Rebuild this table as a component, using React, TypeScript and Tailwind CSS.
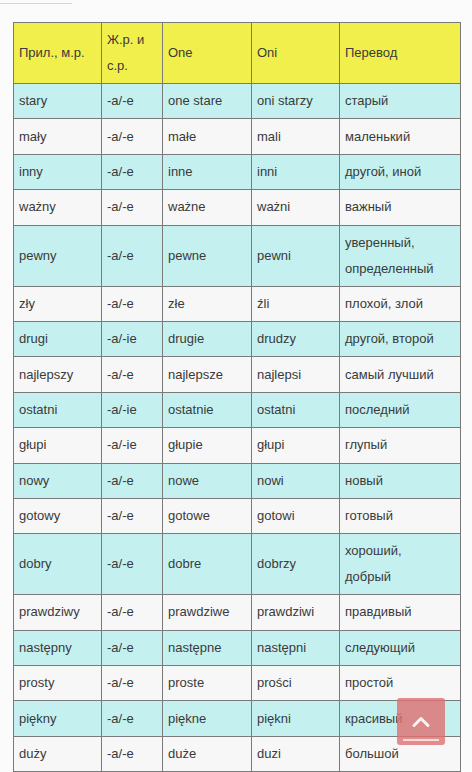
import { ChevronUp } from "lucide-react";

type Row = { m: string; f: string; one: string; oni: string; tr: string[]; tall?: boolean };

const rows: Row[] = [
  { m: "stary", f: "-a/-e", one: "one stare", oni: "oni starzy", tr: ["старый"] },
  { m: "mały", f: "-a/-e", one: "małe", oni: "mali", tr: ["маленький"] },
  { m: "inny", f: "-a/-e", one: "inne", oni: "inni", tr: ["другой, иной"] },
  { m: "ważny", f: "-a/-e", one: "ważne", oni: "ważni", tr: ["важный"] },
  { m: "pewny", f: "-a/-e", one: "pewne", oni: "pewni", tr: ["уверенный,", "определенный"], tall: true },
  { m: "zły", f: "-a/-e", one: "złe", oni: "źli", tr: ["плохой, злой"] },
  { m: "drugi", f: "-a/-ie", one: "drugie", oni: "drudzy", tr: ["другой, второй"] },
  { m: "najlepszy", f: "-a/-e", one: "najlepsze", oni: "najlepsi", tr: ["самый лучший"] },
  { m: "ostatni", f: "-a/-ie", one: "ostatnie", oni: "ostatni", tr: ["последний"] },
  { m: "głupi", f: "-a/-ie", one: "głupie", oni: "głupi", tr: ["глупый"] },
  { m: "nowy", f: "-a/-e", one: "nowe", oni: "nowi", tr: ["новый"] },
  { m: "gotowy", f: "-a/-e", one: "gotowe", oni: "gotowi", tr: ["готовый"] },
  { m: "dobry", f: "-a/-e", one: "dobre", oni: "dobrzy", tr: ["хороший,", "добрый"], tall: true },
  { m: "prawdziwy", f: "-a/-e", one: "prawdziwe", oni: "prawdziwi", tr: ["правдивый"] },
  { m: "następny", f: "-a/-e", one: "następne", oni: "następni", tr: ["следующий"] },
  { m: "prosty", f: "-a/-e", one: "proste", oni: "prości", tr: ["простой"] },
  { m: "piękny", f: "-a/-e", one: "piękne", oni: "piękni", tr: ["красивый"] },
  { m: "duży", f: "-a/-e", one: "duże", oni: "duzi", tr: ["большой"] },
];

const cell = "border border-[#7a7a7a] px-[5px] py-0 align-middle";

export default function App() {
  return (
    <div className="relative h-[772px] w-[472px] overflow-hidden bg-[#fbfbfb] font-['Liberation_Sans',Arial,sans-serif] text-[13px] leading-[26px] text-[#3a3a3a]">
      <div className="h-[3px]" />
      <div className="h-px w-[72px] bg-[#d4d4d4]" />
      <div className="pl-[13px] pt-[18px]">
        <table className="w-[447px] table-fixed border-collapse">
          <colgroup>
            <col className="w-[88px]" />
            <col className="w-[61px]" />
            <col className="w-[89px]" />
            <col className="w-[88px]" />
            <col className="w-[121px]" />
          </colgroup>
          <thead>
            <tr className="h-[61px] bg-[#f1ef4c]">
              <th className={`${cell} text-left font-normal`}>Прил., м.р.</th>
              <th className={`${cell} text-left font-normal`}>
                Ж.р. и
                <br />
                с.р.
              </th>
              <th className={`${cell} text-left font-normal`}>One</th>
              <th className={`${cell} text-left font-normal`}>Oni</th>
              <th className={`${cell} text-left font-normal`}>Перевод</th>
            </tr>
          </thead>
          <tbody>
            {rows.map((r, i) => (
              <tr
                key={r.m}
                className={`${r.tall ? "h-[61px]" : "h-[35.4px]"} ${i % 2 === 0 ? "bg-[#c4f1f0]" : "bg-[#f7f7f7]"}`}
              >
                <td className={cell}>{r.m}</td>
                <td className={cell}>{r.f}</td>
                <td className={cell}>{r.one}</td>
                <td className={cell}>{r.oni}</td>
                <td className={cell}>
                  {r.tr.map((t, j) => (
                    <div key={j}>{t}</div>
                  ))}
                </td>
              </tr>
            ))}
          </tbody>
        </table>
      </div>

      <button className="absolute left-[397px] top-[698px] flex h-[47px] w-[48px] flex-col items-center justify-center rounded-[3px] bg-[#df6f6f]/80">
        <ChevronUp className="h-7 w-7 text-white/90" strokeWidth={2.5} />
        <div className="absolute bottom-[4px] h-[2px] w-[36px] bg-white/70" />
      </button>
    </div>
  );
}
